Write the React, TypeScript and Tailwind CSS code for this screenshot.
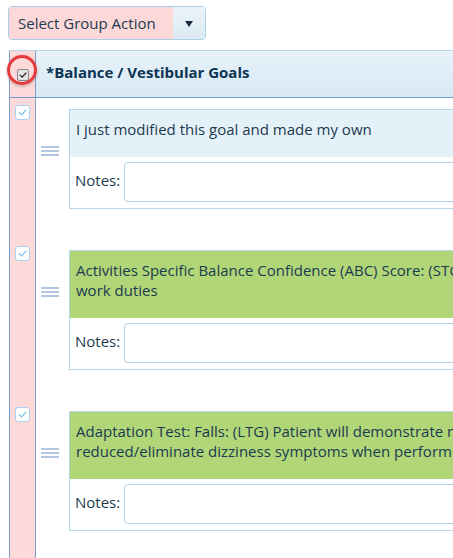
import React from 'react';

const goals = [
  {
    id: 1,
    lines: ['I just modified this goal and made my own'],
    custom: true,
  },
  {
    id: 2,
    lines: [
      'Activities Specific Balance Confidence (ABC) Score: (STG) Patient will report an ABC score of 80% or greater to safely return to',
      'work duties',
    ],
    custom: false,
  },
  {
    id: 3,
    lines: [
      'Adaptation Test: Falls: (LTG) Patient will demonstrate no falls with head movement tasks and',
      'reduced/eliminate dizziness symptoms when performing functional activities',
    ],
    custom: false,
  },
];

const CheckIcon = ({ className }: { className: string }) => (
  <svg viewBox="0 0 12 12" className={className} fill="none">
    <path d="M2.5 6.2 L5 8.6 L9.6 3.6" stroke="currentColor" strokeWidth="1.4" strokeLinecap="round" strokeLinejoin="round" />
  </svg>
);

const DragHandle = () => (
  <div className="flex flex-col gap-[2px] w-[18px]">
    <span className="h-[2px] bg-[#b3c8e0]" />
    <span className="h-[2px] bg-[#b3c8e0]" />
    <span className="h-[2px] bg-[#b3c8e0]" />
  </div>
);

export default function App() {
  return (
    <div
      className="w-[453px] h-[558px] overflow-hidden bg-white text-[#1b3b50]"
      style={{ fontFamily: '"Open Sans", "Noto Sans", sans-serif' }}
    >
      {/* group action */}
      <div className="pt-[6px] pl-[8px]">
        <div className="flex w-[198px] h-[34px] border border-[#a9cfe6] rounded-[4px] overflow-hidden">
          <div className="flex-1 bg-[#fdd8d8] flex items-center pl-[9px] text-[15px]">Select Group Action</div>
          <div className="w-[32px] bg-gradient-to-b from-[#ecf4fa] to-[#dceaf4] flex items-center justify-center">
            <svg viewBox="0 0 8 6" className="w-[8px] h-[6px] mt-[1px]">
              <path d="M0 0 H8 L4 6 Z" fill="#1c2c3c" />
            </svg>
          </div>
        </div>
      </div>

      {/* goal table */}
      <div className="mt-[10px] ml-[9px] w-[800px]">
        <div className="flex h-[48px] border-t border-t-[#b8d6ea] border-b border-b-[#6f9dd2]">
          <div className="relative w-[27px] shrink-0 bg-[#fdd9d9] border-l border-r border-[#7d9ecf] flex items-center justify-center">
            <div className="w-[12px] h-[12px] mt-[1px] rounded-[2px] border border-[#8a8a8a] bg-[#e4e4e4] flex items-center justify-center">
              <CheckIcon className="w-[10px] h-[10px] text-[#222]" />
            </div>
            <div className="absolute left-[-3px] top-[4px] w-[30px] h-[30px] rounded-full border-[3px] border-[#e63a3a] shadow-[0_1px_3px_rgba(0,0,0,0.3)]" />
          </div>
          <div className="flex-1 bg-gradient-to-b from-[#e7f2f9] to-[#d8e9f5] flex items-center pl-[10px] pb-[3px] text-[15px] font-bold text-[#0c3454]">
            *Balance / Vestibular Goals
          </div>
        </div>

        {goals.map((g) => (
          <div key={g.id} className="flex">
            <div className="w-[27px] shrink-0 bg-[#fdd9d9] border-l border-r border-[#7d9ecf] flex justify-center pt-[7px]">
              <div className="w-[15px] h-[15px] rounded-[3px] border border-[#a8d3ef] bg-white flex items-center justify-center">
                <CheckIcon className="w-[11px] h-[11px] text-[#7fc4ee]" />
              </div>
            </div>
            <div className="w-[33px] shrink-0 pt-[48px] pl-[5px]">
              <DragHandle />
            </div>
            <div className="pt-[11px] pb-[30px]">
              <div className="w-[640px] border border-[#b6d6e9]">
                <div className={`${g.custom ? 'bg-[#e5f1f8]' : 'bg-[#b1d678]'} px-[6px] pt-[9px] pb-[17px] text-[15px] leading-[20.5px] whitespace-nowrap`}>
                  {g.lines.map((l, i) => (
                    <div key={i}>{l}</div>
                  ))}
                </div>
                <div className="flex items-center px-[5px] pt-[5px] pb-[6px]">
                  <span className="text-[15px] mr-[4px] pb-[2px]">Notes:</span>
                  <div className="flex-1 h-[40px] border border-[#aed1e8] rounded-[4px]" />
                </div>
              </div>
            </div>
          </div>
        ))}
      </div>
    </div>
  );
}
